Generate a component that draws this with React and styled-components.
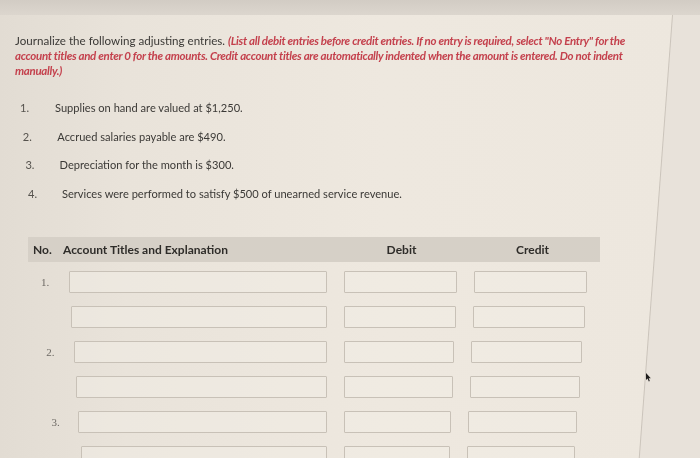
import React from 'react'
import styled, { createGlobalStyle } from 'styled-components'

const GlobalStyle = createGlobalStyle`
  html, body {
    margin: 0;
    padding: 0;
    background: #d8d3cc;
  }
  * {
    box-sizing: border-box;
  }
`

const Page = styled.div`
  width: 700px;
  height: 458px;
  overflow: hidden;
  display: flex;
  flex-direction: column;
  font-family: Lato, 'Liberation Sans', sans-serif;
  color: #3b3936;
`

const TopBand = styled.div`
  height: 15px;
  flex: none;
  background: linear-gradient(180deg, #d2ccc4, #dcd6ce);
`

const Main = styled.div`
  flex: 1;
  display: flex;
  position: relative;
  background: #e8e2da;
`

// the photo is taken at a slant, so the panel's right edge leans in
const PanelFrame = styled.div`
  flex: 1;
  filter: drop-shadow(1px 0 0 #cbc4bb);
`

const Panel = styled.div`
  height: 100%;
  padding: 18px 0 0 15px;
  background: linear-gradient(90deg, #e2dcd3 0%, #e9e3da 18%, #eee8df 55%, #ede7de 100%);
  clip-path: polygon(0 0, 672px 0, 638px 100%, 0 100%);
`

const Instructions = styled.p`
  margin: 0;
  width: 640px;
  font-size: 11.6px;
  line-height: 15px;
`

const Note = styled.span`
  color: #c4414d;
  font-weight: 700;
  font-style: italic;
  font-size: 11.5px;
  letter-spacing: -0.3px;
`

const List = styled.ol`
  margin: 22px 0 0;
  padding: 0;
  list-style: none;
  display: flex;
  flex-direction: column;
  gap: 12.5px;
`

const Item = styled.li`
  display: flex;
  font-size: 11.1px;
  line-height: 16px;
  padding-left: ${p => 5 + p.$i * 2.7}px;
`

const ItemNo = styled.span`
  width: ${p => 35 - p.$i * 0.4}px;
  flex: none;
  color: #55524d;
`

const Table = styled.div`
  margin: 35.5px 0 0 13px;
`

const HeaderBar = styled.div`
  width: 572px;
  height: 25px;
  display: grid;
  grid-template-columns: 12px 264px 113px 113px;
  column-gap: 18px;
  align-items: center;
  padding-left: 5px;
  background: #d6d0c7;
  font-size: 12px;
  font-weight: 700;
  color: #2e2c29;
`

const HeadCell = styled.span`
  white-space: nowrap;
  text-align: ${p => (p.$center ? 'center' : 'left')};
`

const Rows = styled.div`
  padding-top: 9px;
  display: flex;
  flex-direction: column;
  gap: 13px;
`

const Row = styled.div`
  display: grid;
  height: 22px;
  align-items: center;
  padding-left: ${p => 13 + p.$i * 2.6}px;
  grid-template-columns:
    ${p => 11 - p.$i * 0.3}px
    ${p => 258 - p.$i * 2.3}px
    ${p => 113 - p.$i * 1.4}px
    ${p => 113 - p.$i * 1}px;
  column-gap: 17px;
`

const RowLabel = styled.span`
  font-family: 'Liberation Serif', serif;
  font-size: 11px;
  color: #6d6964;
  white-space: nowrap;
`

const Field = styled.div`
  height: 22px;
  border: 1px solid #c8c1b7;
  border-radius: 1px;
  background: rgba(242, 237, 230, 0.5);
`

const Cursor = styled.svg`
  position: absolute;
  left: 645px;
  top: 358px;
`

const items = [
  'Supplies on hand are valued at $1,250.',
  'Accrued salaries payable are $490.',
  'Depreciation for the month is $300.',
  'Services were performed to satisfy $500 of unearned service revenue.',
]

const rows = ['1.', '', '2.', '', '3.', '']

export default function App() {
  return (
    <Page>
      <GlobalStyle />
      <TopBand />
      <Main>
        <PanelFrame>
          <Panel>
            <Instructions>
              Journalize the following adjusting entries.{' '}
              <Note>
                (List all debit entries before credit entries. If no entry is required, select "No Entry" for the
                <br />
                account titles and enter 0 for the amounts. Credit account titles are automatically indented when the
                amount is entered. Do not indent
                <br />
                manually.)
              </Note>
            </Instructions>

            <List>
              {items.map((text, i) => (
                <Item key={i} $i={i}>
                  <ItemNo $i={i}>{i + 1}.</ItemNo>
                  <span>{text}</span>
                </Item>
              ))}
            </List>

            <Table>
              <HeaderBar>
                <HeadCell>No.</HeadCell>
                <HeadCell>Account Titles and Explanation</HeadCell>
                <HeadCell $center>Debit</HeadCell>
                <HeadCell $center>Credit</HeadCell>
              </HeaderBar>
              <Rows>
                {rows.map((label, i) => (
                  <Row key={i} $i={i}>
                    <RowLabel>{label}</RowLabel>
                    <Field />
                    <Field />
                    <Field />
                  </Row>
                ))}
              </Rows>
            </Table>
          </Panel>
        </PanelFrame>
        <Cursor width="6" height="9" viewBox="0 0 6 9">
          <path d="M1 0 L1 7 L2.6 5.6 L3.8 8.4 L4.8 8 L3.7 5.3 L5.8 5.2 Z" fill="#1e1d1c" />
        </Cursor>
      </Main>
    </Page>
  )
}
